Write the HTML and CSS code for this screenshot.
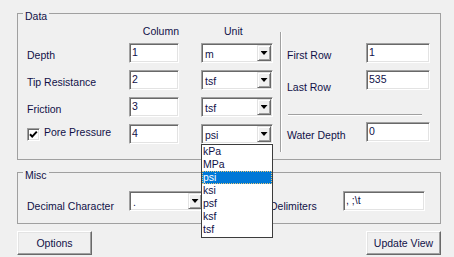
FILE: index.html
```html
<!DOCTYPE html>
<html>
<head>
<meta charset="utf-8">
<link rel="stylesheet" href="styles.css">
</head>
<body>
<div class="dialog">
  <fieldset class="group group-data">
    <legend>Data</legend>
    <div class="data-body">
      <div class="fields">
        <span></span><span class="hdr hdr-col">Column</span><span class="hdr hdr-unit">Unit</span>

        <span class="lbl">Depth</span>
        <div class="edit edit-c">1</div>
        <div class="combo"><span class="combo-text">m</span><span class="combo-btn"><i class="arrow"></i></span></div>

        <span class="lbl">Tip Resistance</span>
        <div class="edit edit-c">2</div>
        <div class="combo"><span class="combo-text">tsf</span><span class="combo-btn"><i class="arrow"></i></span></div>

        <span class="lbl">Friction</span>
        <div class="edit edit-c">3</div>
        <div class="combo"><span class="combo-text">tsf</span><span class="combo-btn"><i class="arrow"></i></span></div>

        <span class="lbl lbl-check"><span class="check"><svg width="11" height="11" viewBox="0 0 11 11"><path d="M2 5.2 L4.2 7.6 L8.8 2.6" fill="none" stroke="#000" stroke-width="2"/></svg></span>Pore Pressure</span>
        <div class="edit edit-c">4</div>
        <div class="combo"><span class="combo-text">psi</span><span class="combo-btn"><i class="arrow"></i></span>
          <ul class="list">
            <li>kPa</li>
            <li>MPa</li>
            <li class="sel">psi</li>
            <li>ksi</li>
            <li>psf</li>
            <li>ksf</li>
            <li>tsf</li>
          </ul>
        </div>
      </div>
      <div class="vsep"></div>
      <div class="rows">
        <div class="row"><span class="lbl lbl-r">First Row</span><div class="edit edit-r">1</div></div>
        <div class="row row-2"><span class="lbl lbl-r lbl-low">Last Row</span><div class="edit edit-r">535</div></div>
        <div class="hsep"></div>
        <div class="row row-3"><span class="lbl lbl-r lbl-mid">Water Depth</span><div class="edit edit-r">0</div></div>
      </div>
    </div>
  </fieldset>

  <fieldset class="group group-misc">
    <legend>Misc</legend>
    <div class="misc-body">
      <span class="lbl lbl-dec">Decimal Character</span>
      <div class="combo combo-dec"><span class="combo-text">.</span><span class="combo-btn"><i class="arrow"></i></span></div>
      <span class="lbl lbl-delim">Delimiters</span>
      <div class="edit edit-delim">, ;\t</div>
    </div>
  </fieldset>

  <div class="buttons">
    <button class="btn">Options</button>
    <button class="btn">Update View</button>
  </div>
</div>
</body>
</html>
```

FILE: styles.css
```css
* { box-sizing: border-box; }
html, body { margin: 0; padding: 0; }
body {
  background: #f0f0f0;
  width: 454px;
  height: 257px;
  overflow: hidden;
  font-family: "Liberation Sans", Arial, sans-serif;
  font-size: 10.5px;
  line-height: 12px;
  color: #101048;
}
.dialog { padding: 4px 13px 0 17px; }

.group {
  margin: 0;
  border: 1px solid #a0a0a0;
  min-width: 0;
}
.group legend {
  padding: 6px 2px 0;
  margin-left: -4px;
  line-height: 12px;
}
.group-data { padding: 2px 0 15px 9px; }
.group-misc { margin-top: 3px; padding: 10px 0 12px 9px; }

.data-body { display: flex; align-items: flex-start; }
.fields {
  display: grid;
  grid-template-columns: 102px 72px 72px;
  grid-template-rows: 12px repeat(4, 20px);
  row-gap: 7px;
}
.hdr { white-space: nowrap; padding-top: 1px; }
.hdr-col { text-align: right; width: 50px; }
.hdr-unit { padding-left: 23px; }

.lbl { padding-top: 6px; white-space: nowrap; }
.lbl-check { display: flex; align-items: flex-start; padding-top: 2px; }
.check {
  width: 13px;
  height: 13px;
  margin: 2px 4px 0 0;
  background: #fff;
  border: 1px solid;
  border-color: #a0a0a0 #fff #fff #a0a0a0;
  box-shadow: inset 1px 1px #696969, inset -1px -1px #e3e3e3;
  display: flex;
  align-items: center;
  justify-content: center;
  flex: none;
}
.check svg { display: block; }

.edit {
  height: 20px;
  background: #fff;
  border: 1px solid;
  border-color: #a0a0a0 #fff #fff #a0a0a0;
  box-shadow: inset 1px 1px #696969, inset -1px -1px #e3e3e3;
  padding: 2px 0 0 2px;
  white-space: nowrap;
}
.edit-c { width: 50px; }

.combo {
  position: relative;
  height: 20px;
  display: flex;
  background: #fff;
  border: 1px solid;
  border-color: #a0a0a0 #fff #fff #a0a0a0;
  box-shadow: inset 1px 1px #696969, inset -1px -1px #e3e3e3;
  padding: 1px;
}
.combo-text { flex: 1; padding: 3px 0 0 2px; line-height: 12px; }
.combo-btn {
  width: 14px;
  height: 16px;
  background: #f0f0f0;
  border: 1px solid;
  border-color: #e3e3e3 #696969 #696969 #e3e3e3;
  box-shadow: inset 1px 1px #fff, inset -1px -1px #a0a0a0;
  display: flex;
  align-items: center;
  justify-content: center;
}
.arrow {
  display: block;
  width: 7px;
  height: 4px;
  background: #000;
  clip-path: polygon(0 0, 100% 0, 50% 100%);
}

.list {
  position: absolute;
  left: -1px;
  top: calc(100% + 1px);
  width: 72px;
  margin: 0;
  padding: 0 0 1px;
  list-style: none;
  background: #fff;
  border: 1px solid #3c3c3c;
  z-index: 10;
}
.list li { height: 13px; line-height: 13px; padding-left: 1px; }
.list li.sel {
  background: #0078d7;
  color: #fff;
  outline: 1px dotted #e8c878;
  outline-offset: -1px;
}

.vsep {
  width: 1px;
  height: 120px;
  margin: 8px 0 -8px 7px;
  background: #a0a0a0;
  box-shadow: 1px 0 #fff;
}
.rows {
  width: 159px;
  padding: 19px 10px 0 6px;
  display: flex;
  flex-direction: column;
}
.row { display: flex; align-items: flex-start; height: 20px; }
.row-2 { margin-top: 7px; }
.row-3 { margin-top: 7px; }
.lbl-r { width: 79px; }
.lbl-low { padding-top: 11px; }
.lbl-mid { padding-top: 7px; }
.edit-r { width: 64px; }
.hsep {
  height: 1px;
  width: 134px;
  margin: 24px 0 0 1px;
  background: #a0a0a0;
  box-shadow: 0 1px #fff;
}

.misc-body { display: flex; align-items: flex-start; height: 20px; }
.lbl-dec { width: 102px; padding-top: 9px; }
.combo-dec { width: 75px; }
.lbl-delim { width: 73px; margin-left: 66px; padding-top: 9px; }
.edit-delim { width: 82px; }

.buttons {
  display: flex;
  justify-content: space-between;
  margin-top: 7px;
}
.btn {
  width: 75px;
  height: 24px;
  padding: 0;
  font: inherit;
  color: inherit;
  background: #f0f0f0;
  border: 1px solid;
  border-color: #fff #696969 #696969 #fff;
  box-shadow: inset -1px -1px #a0a0a0, inset 1px 1px #e3e3e3;
}
```
